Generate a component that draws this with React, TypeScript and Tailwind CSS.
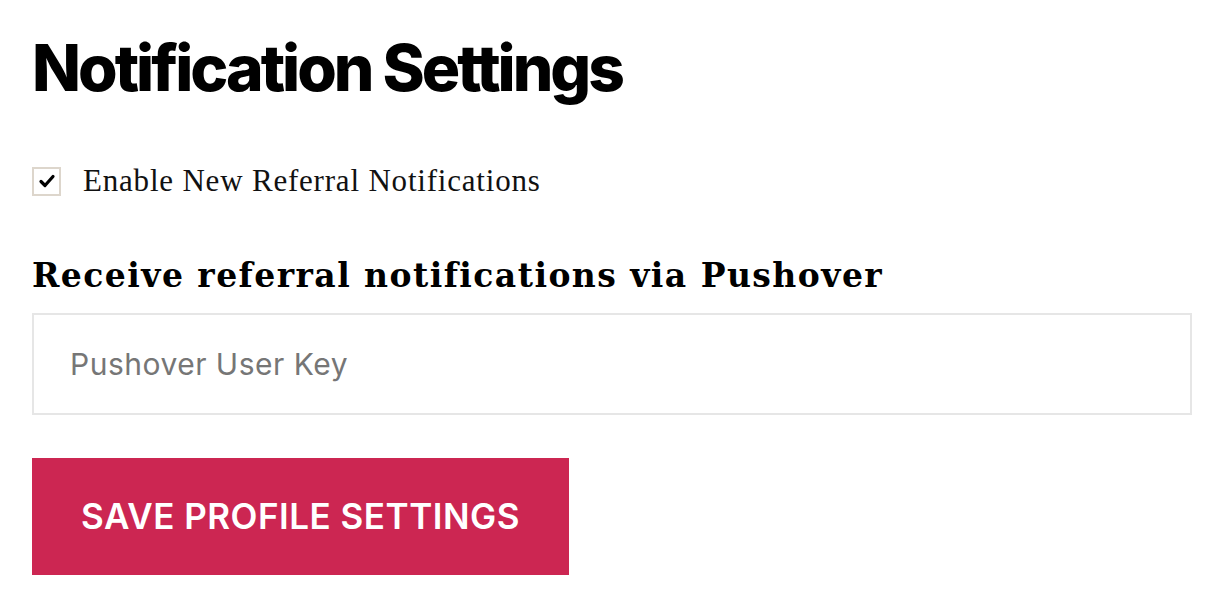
import React from "react";

export default function App() {
  return (
    <div className="min-h-screen bg-white px-8 pt-[30px]">
      <h1 className="font-['Inter',sans-serif] text-[64px] font-extrabold leading-[76px] tracking-[-3px] text-black">
        Notification Settings
      </h1>

      <label className="mt-[57px] flex items-center gap-[22px]">
        <span className="flex h-[29px] w-[29px] items-center justify-center border-2 border-[#ddd6cc] bg-white">
          <svg width="20" height="20" viewBox="0 0 20 20">
            <path d="M4 10.5 L8 14.5 L16 5.5" fill="none" stroke="#000" strokeWidth="3.2" strokeLinecap="round" strokeLinejoin="round" />
          </svg>
        </span>
        <span className="font-['Liberation_Serif',serif] text-[31px] leading-[36px] tracking-[0.8px] text-[#111]">
          Enable New Referral Notifications
        </span>
      </label>

      <h2 className="mt-[57px] font-['DejaVu_Serif',serif] text-[33px] font-bold leading-[40px] tracking-[1.45px] text-black">
        Receive referral notifications via Pushover
      </h2>

      <div className="mt-[17px] flex h-[102px] w-[1160px] items-center border-2 border-[#e6e6e6] px-[36px]">
        <span className="font-['Inter',sans-serif] text-[30px] tracking-[0.5px] text-[#767676]">Pushover User Key</span>
      </div>

      <button className="mt-[43px] flex h-[117px] w-[537px] items-center justify-center bg-[#cc2652] font-['Inter',sans-serif] text-[35px] font-semibold tracking-[0.5px] text-white">
        SAVE PROFILE SETTINGS
      </button>
    </div>
  );
}
